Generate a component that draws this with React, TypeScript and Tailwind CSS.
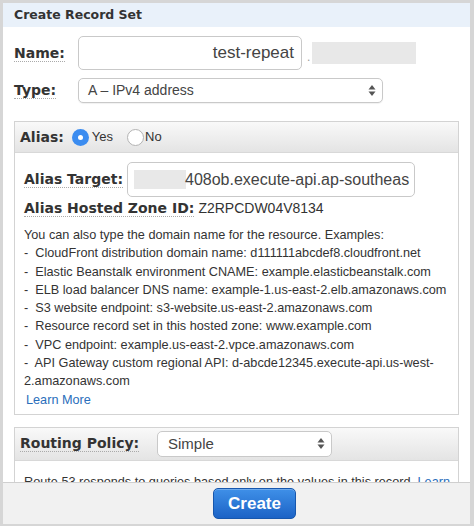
import React from "react";

const labelFont = { fontFamily: '"DejaVu Sans", Verdana, sans-serif' };
const bodyFont = { fontFamily: '"Liberation Sans", Arial, sans-serif' };

const Arrows: React.FC = () => (
  <svg width="8" height="13" viewBox="0 0 8 13" className="shrink-0">
    <path d="M4 1 L7.5 5.5 H0.5 Z" fill="#555" />
    <path d="M4 12 L7.5 7.5 H0.5 Z" fill="#555" />
  </svg>
);

const Label: React.FC<{ text: string; className?: string }> = ({ text, className }) => (
  <span
    style={labelFont}
    className={`border-b border-dotted border-[#aaa] font-bold leading-[17px] text-[#333] ${className ?? ""}`}
  >
    {text}
  </span>
);

const App: React.FC = () => {
  const examples = [
    "CloudFront distribution domain name: d111111abcdef8.cloudfront.net",
    "Elastic Beanstalk environment CNAME: example.elasticbeanstalk.com",
    "ELB load balancer DNS name: example-1.us-east-2.elb.amazonaws.com",
    "S3 website endpoint: s3-website.us-east-2.amazonaws.com",
    "Resource record set in this hosted zone: www.example.com",
    "VPC endpoint: example.us-east-2.vpce.amazonaws.com",
  ];

  return (
    <div
      style={bodyFont}
      className="flex h-[526px] w-[474px] flex-col overflow-hidden border-[3px] border-b-2 border-r-4 border-[#d6d6d6] bg-white text-[#333]"
    >
      {/* title bar */}
      <div
        style={labelFont}
        className="flex h-[24px] shrink-0 items-center bg-[#e9f1fa] px-[11px] text-[12.5px] font-bold text-[#333]"
      >
        Create Record Set
      </div>

      <div className="flex-1 overflow-hidden px-[11px]">
        {/* name */}
        <div className="mt-[9px] flex h-[34px] items-center">
          <div className="w-[64px] text-[14px]">
            <Label text="Name:" />
          </div>
          <div className="flex h-[34px] w-[224px] items-center justify-end rounded-[5px] border border-[#c9c9c9] bg-white px-[7px] text-[17px] text-[#444]">
            test-repeat
          </div>
          <span className="ml-[5px] mt-[8px] text-[12px] text-[#999]">.</span>
          <div className="ml-[2px] h-[22px] w-[104px] bg-[#e8e8e8]" />
        </div>

        {/* type */}
        <div className="mt-[8px] flex h-[25px] items-center">
          <div className="w-[64px] text-[14px]">
            <Label text="Type:" />
          </div>
          <div className="flex h-[25px] w-[305px] items-center justify-between rounded-[5px] border border-[#c9c9c9] bg-white pl-[9px] pr-[6px] text-[14px] text-[#444] shadow-[0_1px_1px_rgba(0,0,0,0.06)]">
            <span>A – IPv4 address</span>
            <Arrows />
          </div>
        </div>

        {/* alias panel */}
        <div className="mt-[18px] border border-[#d3d3d3]">
          <div className="flex h-[31px] items-center border-b border-[#d8d8d8] bg-gradient-to-b from-[#f9f9f9] to-[#e4e4e4] px-[5px]">
            <span style={labelFont} className="text-[14px] font-bold text-[#333]">
              Alias:
            </span>
            <span className="ml-[8px] flex h-[17px] w-[17px] items-center justify-center rounded-full bg-[#3b8cf0]">
              <span className="h-[5px] w-[5px] rounded-full bg-white" />
            </span>
            <span className="ml-[3px] text-[13px] text-[#333]">Yes</span>
            <span className="ml-[14px] h-[17px] w-[17px] rounded-full border border-[#b3b3b3] bg-white" />
            <span className="ml-[1px] text-[13px] text-[#333]">No</span>
          </div>

          <div className="px-[9px] pb-[5px] pt-[9px]">
            <div className="flex h-[35px] items-center">
              <div className="w-[103px] text-[14px]">
                <Label text="Alias Target:" />
              </div>
              <div className="flex h-[35px] w-[288px] items-center overflow-hidden whitespace-nowrap rounded-[5px] border border-[#c9c9c9] bg-white pl-[6px] text-[16px] text-[#444]">
                <span className="h-[19px] w-[52px] shrink-0 bg-[#e8e8e8]" />
                <span className="-ml-[1px]">408ob.execute-api.ap-southeas</span>
              </div>
            </div>

            <div className="flex h-[22px] items-center">
              <span className="text-[14px]">
                <Label text="Alias Hosted Zone ID:" />
              </span>
              <span className="ml-[4px] text-[14px] text-[#333]">Z2RPCDW04V8134</span>
            </div>

            <div className="mt-[7px] text-[12.7px] leading-[18.3px] text-[#333]">
              <div>You can also type the domain name for the resource. Examples:</div>
              {examples.map((e) => (
                <div key={e} className="whitespace-nowrap">
                  -&nbsp; {e}
                </div>
              ))}
              <div>-&nbsp; API Gateway custom regional API: d-abcde12345.execute-api.us-west-</div>
              <div>2.amazonaws.com</div>
              <div className="pl-[2px] text-[#2a6ebb]">Learn More</div>
            </div>
          </div>
        </div>

        {/* routing policy panel */}
        <div className="mt-[12px] border border-[#d3d3d3]">
          <div className="flex h-[33px] items-center border-b border-[#d8d8d8] bg-gradient-to-b from-[#f9f9f9] to-[#e4e4e4] px-[5px]">
            <span className="w-[137px] text-[14px]">
              <Label text="Routing Policy:" />
            </span>
            <div className="flex h-[26px] w-[175px] items-center justify-between rounded-[5px] border border-[#c9c9c9] bg-white pl-[10px] pr-[6px] text-[15px] text-[#444]">
              <span>Simple</span>
              <Arrows />
            </div>
          </div>
          <div className="whitespace-nowrap px-[9px] pt-[12px] text-[12.7px] leading-[18px] text-[#333]">
            Route 53 responds to queries based only on the values in this record.{" "}
            <span className="text-[#2a6ebb]">Learn</span>
          </div>
        </div>
      </div>

      {/* footer */}
      <div className="flex h-[42px] shrink-0 items-center border-t border-[#cfcfcf] bg-[#f1f1f1]">
        <button className="ml-[210px] h-[31px] w-[83px] rounded-[5px] border border-[#1757ad] bg-gradient-to-b from-[#3f90e8] to-[#1c63c6] text-[17px] font-bold text-white shadow-[inset_0_1px_0_rgba(255,255,255,0.25)]">
          Create
        </button>
      </div>
    </div>
  );
};

export default App;
